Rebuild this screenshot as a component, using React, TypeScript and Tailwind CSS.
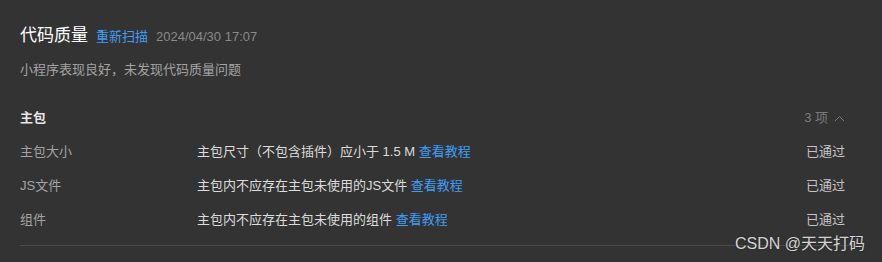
import React from 'react';

// Rows of the main package check list
const rows = [
  { name: '主包大小', desc: '主包尺寸（不包含插件）应小于 1.5 M', status: '已通过' },
  { name: 'JS文件', desc: '主包内不应存在主包未使用的JS文件', status: '已通过' },
  { name: '组件', desc: '主包内不应存在主包未使用的组件', status: '已通过' },
];

const App = () => {
  return (
    <div
      className="relative w-[882px] h-[262px] overflow-hidden bg-[#333333]"
      style={{ fontFamily: '"Liberation Sans", "Noto Sans CJK SC", sans-serif' }}
    >
      <div className="pl-5 pr-[37px] pt-[26px]">
        {/* Title row */}
        <div className="flex items-baseline h-[20px]">
          <h1 className="text-[17px] leading-[20px] text-white">代码质量</h1>
          <span className="ml-[8px] text-[13px] leading-[20px] text-[#409ef5] cursor-pointer">重新扫描</span>
          <span className="ml-[8px] text-[13px] leading-[20px] text-[#8a8a8a]">2024/04/30 17:07</span>
        </div>

        <p className="mt-[14px] text-[13px] leading-[20px] text-[#a3a3a3]">小程序表现良好，未发现代码质量问题</p>

        {/* Main package section */}
        <div className="mt-[21px]">
          <div className="flex items-center justify-between h-[34px]">
            <span className="text-[13px] font-bold text-[#e6e6e6]">主包</span>
            <span className="flex items-center gap-[6px] text-[13px] text-[#7c7c7c]">
              3 项
              <svg width="11" height="7" viewBox="0 0 11 7" fill="none">
                <polyline points="1,6 5.5,1.5 10,6" stroke="#7c7c7c" strokeWidth="1" />
              </svg>
            </span>
          </div>

          {rows.map((r) => (
            <div key={r.name} className="grid grid-cols-[177px_1fr_auto] items-center h-[34px] text-[13px]">
              <span className="text-[#a3a3a3]">{r.name}</span>
              <span className="text-[#dcdcdc]">
                {r.desc} <span className="text-[#409ef5]">查看教程</span>
              </span>
              <span className="text-[#c4c4c4]">{r.status}</span>
            </div>
          ))}
        </div>

        <div className="mt-[8px] mr-[-17px] h-px bg-[#4a4a4a]" />
      </div>

      {/* watermark */}
      <div
        className="absolute right-[17px] bottom-[8px] text-[16px] leading-[20px] text-[#d4d4d4]"
        style={{ textShadow: '0 0 2px #222' }}
      >
        CSDN @天天打码
      </div>
    </div>
  );
};

export default App;
